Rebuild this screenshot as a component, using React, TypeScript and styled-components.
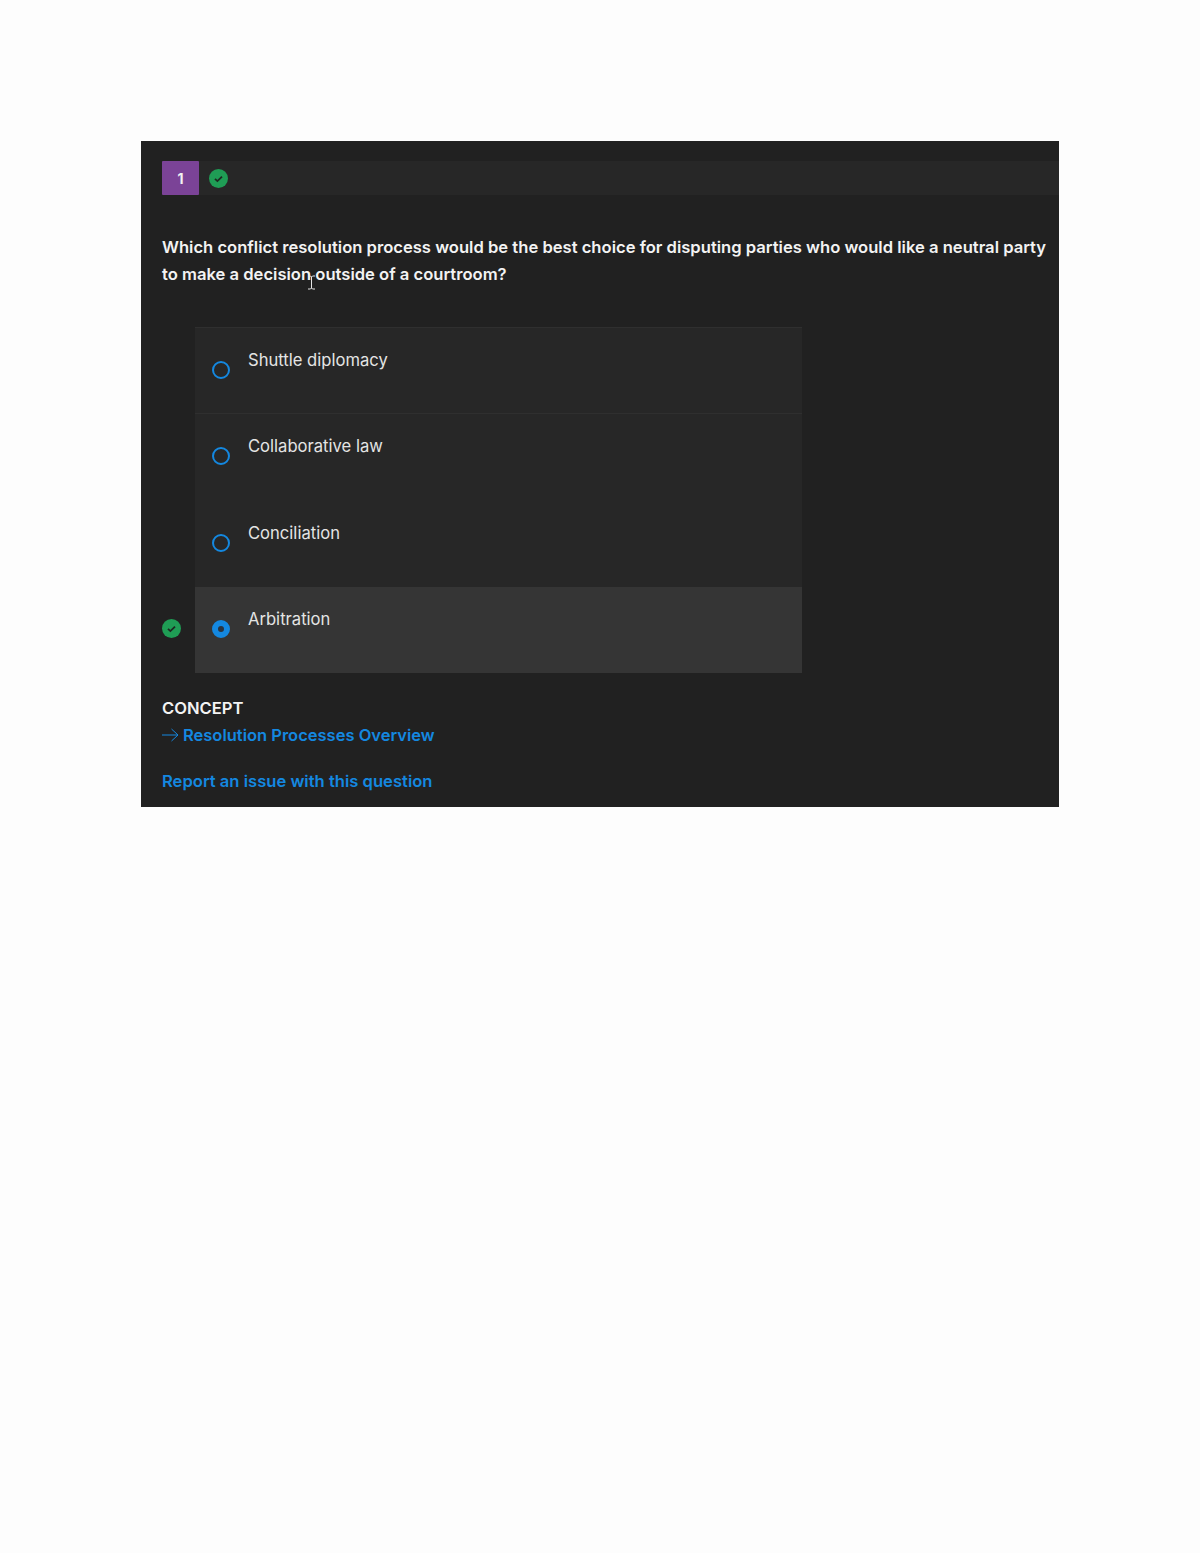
import styled, { createGlobalStyle } from 'styled-components';

const GlobalStyle = createGlobalStyle`
	html, body {
		margin: 0;
		background: #fdfdfd;
		font-family: Inter, "Liberation Sans", sans-serif;
	}
`;

const options = [
	{ label: 'Shuttle diplomacy', divided: true },
	{ label: 'Collaborative law' },
	{ label: 'Conciliation' },
	{ label: 'Arbitration', selected: true, correct: true },
];

function CheckBadge() {
	return (
		<svg width={19} height={19} viewBox={'0 0 19 19'}>
			<circle cx={9.5} cy={9.5} r={9.5} fill={'#1f9d55'} />
			<path d={'M6 9.8l2.4 2.3L13 7.6'} fill={'none'} stroke={'#1d2a22'} strokeWidth={1.8} />
		</svg>
	);
}

export default function App() {
	return (
		<Page>
			<GlobalStyle />
			<Panel>
				<HeaderBar>
					<NumberBadge>1</NumberBadge>
					<CheckBadge />
				</HeaderBar>
				<Question>
					Which conflict resolution process would be the best choice for disputing parties who would like a neutral party to make a decision outside of a courtroom?
					<TextCursor width={9} height={15} viewBox={'0 0 9 15'}>
						<path d={'M1 1h2.5l1 1 1-1H8M4.5 2v11M1 14h2.5l1-1 1 1H8'} fill={'none'} stroke={'#e6e6e6'} strokeWidth={1} />
					</TextCursor>
				</Question>
				<OptionList>
					{options.map(x => (
						<OptionRow key={x.label}>
							<ResultSlot>{x.correct ? <CheckBadge /> : <></>}</ResultSlot>
							<OptionBody $selected={x.selected} $divided={x.divided}>
								<Radio $selected={x.selected} />
								<OptionLabel>{x.label}</OptionLabel>
							</OptionBody>
						</OptionRow>
					))}
				</OptionList>
				<ConceptHeading>CONCEPT</ConceptHeading>
				<ConceptLink>
					<svg width={17} height={14} viewBox={'0 0 17 14'}>
						<path d={'M0 7h15.5M9.5 1l6.5 6-6.5 6'} fill={'none'} stroke={'#1488e0'} strokeWidth={1} />
					</svg>
					Resolution Processes Overview
				</ConceptLink>
				<ReportLink>Report an issue with this question</ReportLink>
			</Panel>
		</Page>
	);
}

const Page = styled.div`
	height: 1553px;
	box-sizing: border-box;
	padding: 141px 141px 0;
`;

const Panel = styled.div`
	height: 666px;
	box-sizing: border-box;
	padding: 20px 0 0 21px;
	background: #212121;
`;

const HeaderBar = styled.div`
	height: 34px;
	display: flex;
	align-items: center;
	gap: 10px;
	background: #272727;
`;

const NumberBadge = styled.div`
	width: 37px;
	height: 34px;
	display: flex;
	align-items: center;
	justify-content: center;
	background: #7b4397;
	border-radius: 1px;
	color: #f2f2f2;
	font-size: 14px;
	font-weight: 700;
`;

const Question = styled.div`
	position: relative;
	width: 890px;
	margin-top: 39px;
	color: #f3f3f3;
	font-size: 16.6px;
	font-weight: 600;
	line-height: 27px;
`;

const TextCursor = styled.svg`
	position: absolute;
	left: 145px;
	top: 41px;
`;

const OptionList = styled.div`
	margin-top: 40px;
	display: flex;
	flex-direction: column;
`;

const OptionRow = styled.div`
	display: flex;
	height: 86.25px;
`;

const ResultSlot = styled.div`
	width: 33px;
	padding-top: 32px;
	box-sizing: border-box;
`;

const OptionBody = styled.div<{ $selected?: boolean; $divided?: boolean }>`
	width: 607px;
	box-sizing: border-box;
	display: flex;
	gap: 18px;
	padding: 22px 0 0 17px;
	background: ${p => (p.$selected ? '#353535' : '#272727')};
	border-bottom: ${p => (p.$divided ? '1px solid #2f2f2f' : 'none')};
	${p => (p.$divided ? 'box-shadow: 0 -1px 0 #2f2f2f;' : '')}
`;

const Radio = styled.span<{ $selected?: boolean }>`
	width: 18px;
	height: 18px;
	margin-top: 11px;
	box-sizing: border-box;
	border-radius: 50%;
	border: ${p => (p.$selected ? '6px solid #1488e0' : '2px solid #1488e0')};
	background: ${p => (p.$selected ? '#2a3440' : 'transparent')};
`;

const OptionLabel = styled.span`
	color: #e4e4e4;
	font-size: 16.6px;
	line-height: 20px;
`;

const ConceptHeading = styled.div`
	margin-top: 25px;
	color: #f3f3f3;
	font-size: 16.6px;
	font-weight: 600;
	line-height: 20px;
`;

const ConceptLink = styled.div`
	margin-top: 7px;
	display: flex;
	align-items: center;
	gap: 4px;
	color: #1488e0;
	font-size: 16.5px;
	font-weight: 600;
	line-height: 20px;
`;

const ReportLink = styled.div`
	margin-top: 26px;
	color: #1488e0;
	font-size: 16.6px;
	font-weight: 600;
	line-height: 20px;
`;
